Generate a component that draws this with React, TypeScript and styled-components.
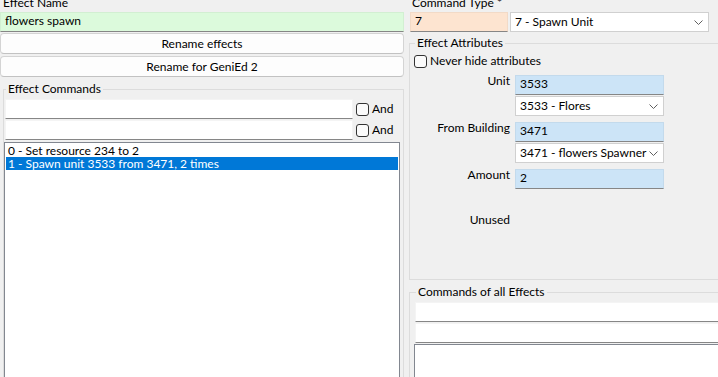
import { Fragment } from 'react';
import styled, { createGlobalStyle } from 'styled-components';

const GlobalStyle = createGlobalStyle`
  html, body {
    margin: 0;
    padding: 0;
    background: #f0f0f0;
  }

  body {
    font-family: Lato, 'Noto Sans', sans-serif;
    font-size: 12px;
    color: #000;
  }
`;

const Window = styled.div`
  display: flex;
  gap: 5px;
  width: 718px;
  height: 377px;
  overflow: hidden;
  background: #f0f0f0;
`;

const LeftColumn = styled.div`
  width: 404px;
  flex-shrink: 0;
  display: flex;
  flex-direction: column;
`;

const RightColumn = styled.div`
  flex: 1;
  min-width: 0;
  display: flex;
  flex-direction: column;
`;

const TopLabel = styled.div<{ $indent?: number }>`
  line-height: 12px;
  margin: -3px 0 3px 0;
  padding-left: ${p => p.$indent ?? 3}px;
  white-space: nowrap;
`;

const TextBox = styled.div<{ $bg?: string; $width?: number }>`
  box-sizing: border-box;
  height: 20px;
  width: ${p => (p.$width ? `${p.$width}px` : 'auto')};
  flex-shrink: 0;
  padding: 0 4px;
  background: ${p => p.$bg ?? '#fff'};
  border: 1px solid rgba(0, 0, 0, 0.04);
  border-bottom-color: #868686;
  line-height: 16px;
  white-space: nowrap;
  overflow: hidden;
`;

const Button = styled.div`
  box-sizing: border-box;
  height: 21px;
  background: #fdfdfd;
  border: 1px solid #d4d4d4;
  border-bottom-color: #c2c2c2;
  border-radius: 4px;
  text-align: center;
  line-height: 19px;
`;

const ButtonStack = styled.div`
  display: flex;
  flex-direction: column;
  gap: 2px;
  margin-top: 1px;
`;

const SelectBox = styled.div<{ $width: number }>`
  box-sizing: border-box;
  height: 20px;
  width: ${p => p.$width}px;
  flex-shrink: 0;
  display: flex;
  align-items: center;
  justify-content: space-between;
  padding: 0 5px 0 4px;
  background: #fff;
  border: 1px solid #d0d0d0;
  line-height: 16px;
  white-space: nowrap;
`;

const Chevron = () => (
  <svg width="9" height="5" viewBox="0 0 9 5">
    <polyline points="0.5,0.5 4.5,4.5 8.5,0.5" fill="none" stroke="#606060" strokeWidth="1" />
  </svg>
);

const Select = ({ value, width }: { value: string; width: number }) => (
  <SelectBox $width={width}>
    <span>{value}</span>
    <Chevron />
  </SelectBox>
);

const GroupBox = styled.fieldset<{ $pad: string; $height?: number; $grow?: boolean; $bleedRight?: boolean }>`
  box-sizing: border-box;
  margin: 0;
  min-width: 0;
  padding: ${p => p.$pad};
  border: 1px solid #dcdcdc;
  display: flex;
  flex-direction: column;
  ${p => (p.$height ? `height: ${p.$height}px; flex-shrink: 0;` : '')}
  ${p => (p.$grow ? 'flex: 1; min-height: 0; margin-bottom: -12px;' : '')}
  ${p => (p.$bleedRight ? 'margin-right: -14px;' : '')}
`;

const GroupTitle = styled.legend`
  padding: 0 2px;
  margin-left: 1px;
  line-height: 12px;
  white-space: nowrap;
`;

const CheckBox = styled.span`
  box-sizing: border-box;
  width: 13px;
  height: 13px;
  flex-shrink: 0;
  border: 1px solid #333;
  border-radius: 3px;
  background: #fbfbfb;
`;

const CheckLabel = styled.label`
  display: flex;
  align-items: center;
  gap: 3px;
  line-height: 16px;
  white-space: nowrap;
`;

const FilterRow = styled.div`
  display: flex;
  align-items: center;
  gap: 3px;
`;

const FilterStack = styled.div`
  display: flex;
  flex-direction: column;
  gap: 1px;
  margin-bottom: 2px;
`;

const ListBox = styled.div`
  box-sizing: border-box;
  flex: 1;
  min-height: 0;
  margin-left: -1px;
  padding: 1px;
  background: #fff;
  border: 1px solid #828790;
`;

const ListItem = styled.div<{ $selected?: boolean }>`
  height: 13px;
  line-height: 13px;
  padding-left: 2px;
  white-space: nowrap;
  overflow: hidden;
  background: ${p => (p.$selected ? '#0078d7' : 'transparent')};
  color: ${p => (p.$selected ? '#fff' : '#000')};
`;

const CommandTypeRow = styled.div`
  display: flex;
  gap: 2px;
  margin-left: 1px;
  margin-bottom: 5px;
`;

const CheckRow = styled.div`
  padding-top: 2px;
`;

const AttrGrid = styled.div`
  display: grid;
  grid-template-columns: 96px 149px;
  column-gap: 5px;
  row-gap: 6px;
  margin-top: 6px;
`;

const AttrLabel = styled.div<{ $offset?: number }>`
  text-align: right;
  line-height: 11px;
  white-space: nowrap;
  margin-top: ${p => p.$offset ?? 0}px;
`;

const FieldStack = styled.div`
  display: flex;
  flex-direction: column;
  gap: 1px;
`;

const AllCommandsStack = styled.div`
  display: flex;
  flex-direction: column;
  gap: 1px;
  flex: 1;
  min-height: 0;
`;

const attributes = [
  { label: 'Unit', value: '3533', option: '3533 - Flores' },
  { label: 'From Building', value: '3471', option: '3471 - flowers Spawner' },
  { label: 'Amount', value: '2' },
];

const commands = ['0 - Set resource 234 to 2', '1 - Spawn unit 3533 from 3471, 2 times'];

export default function App() {
  return (
    <>
      <GlobalStyle />
      <Window>
        <LeftColumn>
          <TopLabel>Effect Name</TopLabel>
          <TextBox $bg="#dcfadc">flowers spawn</TextBox>
          <ButtonStack>
            <Button>Rename effects</Button>
            <Button>Rename for GeniEd 2</Button>
          </ButtonStack>

          <GroupBox $pad="4px 3px 0 1px" $grow style={{ marginTop: 6, marginLeft: 3 }}>
            <GroupTitle>Effect Commands</GroupTitle>
            <FilterStack>
              {[0, 1].map(i => (
                <FilterRow key={i}>
                  <TextBox $width={348} />
                  <CheckLabel>
                    <CheckBox />
                    And
                  </CheckLabel>
                </FilterRow>
              ))}
            </FilterStack>
            <ListBox>
              {commands.map((c, i) => (
                <ListItem key={c} $selected={i === 1}>
                  {c}
                </ListItem>
              ))}
            </ListBox>
          </GroupBox>
        </LeftColumn>

        <RightColumn>
          <TopLabel $indent={3}>Command Type *</TopLabel>
          <CommandTypeRow>
            <TextBox $bg="#fde4d0" $width={98}>
              7
            </TextBox>
            <Select value="7 - Spawn Unit" width={199} />
          </CommandTypeRow>

          <GroupBox $pad="2px 0 0 4px" $height={243} $bleedRight>
            <GroupTitle>Effect Attributes</GroupTitle>
            <CheckRow>
              <CheckLabel>
                <CheckBox />
                Never hide attributes
              </CheckLabel>
            </CheckRow>
            <AttrGrid>
              {attributes.map(a => (
                <Fragment key={a.label}>
                  <AttrLabel>{a.label}</AttrLabel>
                  <FieldStack>
                    <TextBox $bg="#cce4f7">{a.value}</TextBox>
                    {a.option && <Select value={a.option} width={149} />}
                  </FieldStack>
                </Fragment>
              ))}
              <AttrLabel $offset={19}>Unused</AttrLabel>
            </AttrGrid>
          </GroupBox>

          <GroupBox $pad="4px 0 0 5px" $grow $bleedRight style={{ marginTop: 6 }}>
            <GroupTitle>Commands of all Effects</GroupTitle>
            <AllCommandsStack>
              <TextBox />
              <TextBox />
              <ListBox />
            </AllCommandsStack>
          </GroupBox>
        </RightColumn>
      </Window>
    </>
  );
}
